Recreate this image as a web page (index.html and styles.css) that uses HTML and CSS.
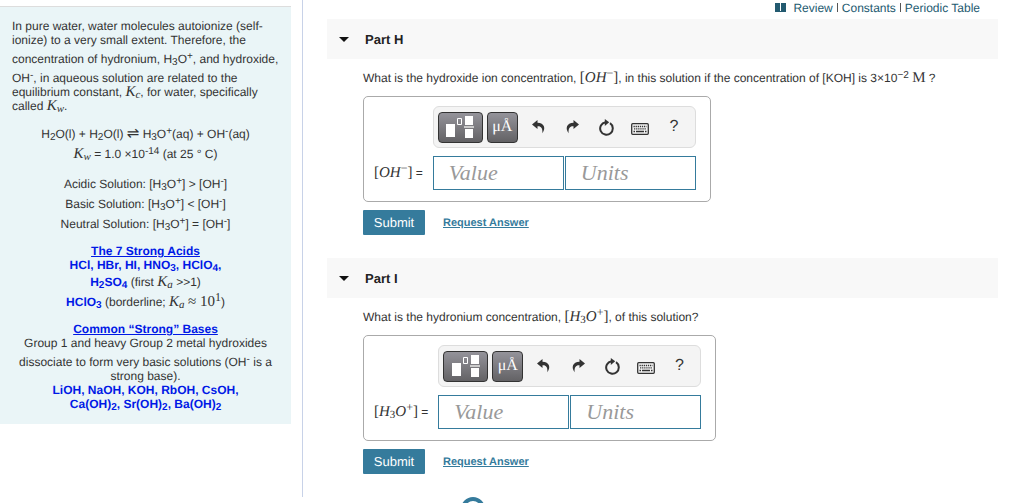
FILE: index.html
```html
<!DOCTYPE html>
<html lang="en">

<head>
    <meta charset="UTF-8">
    <meta name="viewport" content="width=device-width, initial-scale=1.0">
    <title>Hydroxide and Hydronium Concentration</title>
    <link rel="stylesheet" href="styles.css">
</head>

<body>
    <!-- shared toolbar icons -->
    <svg class="icon-defs" width="0" height="0">
        <symbol id="icon-template" viewBox="0 0 28 22">
            <path fill="#fff" d="M0 8h9v13H0zM19 0h8v9h-8zM19 13h8v9h-8z" />
            <path fill="none" stroke="#fff" d="M11.500 2.500h4v6h-4z" />
            <path fill="#ccc" d="M18 10h10v2H18z" />
        </symbol>
        <symbol id="icon-undo" viewBox="0 0 14 14">
            <path d="M5.500 0L0 4.500 5.500 9V6.300c3.500-.3 5.200 1.700 4.900 6.900C14 8.500 12.500 3.100 5.500 2.800z" />
        </symbol>
        <symbol id="icon-redo" viewBox="0 0 14 14">
            <path d="M8.500 0L14 4.500 8.500 9V6.300c-3.500-.3-5.200 1.700-4.900 6.900C0 8.500 1.500 3.100 8.500 2.800z" />
        </symbol>
        <symbol id="icon-reset" viewBox="0 0 16 17">
            <path fill="none" stroke="currentColor" stroke-width="2" d="M12 4.200A6.300 6.300 0 1 1 7.500 3.200" />
            <path d="M6.800 0l4.400 3.300-4.400 3.600z" />
        </symbol>
        <symbol id="icon-keyboard" viewBox="0 0 18 12">
            <rect x=".7" y=".7" width="16.600" height="10.600" rx="1" fill="none" stroke="currentColor" stroke-width="1.300" />
            <path fill="none" stroke="currentColor" stroke-width="1.300" stroke-dasharray="1.300 .8" d="M2.500 3.500h13M3 5.800h12.500" />
            <path fill="none" stroke="currentColor" stroke-width="1.300" d="M2.500 8.500h1.500M5 8.500h8M14 8.500h1.500" />
        </symbol>
    </svg>

    <div class="page">
        <aside class="sidebar">
            <div class="intro">
                <p class="intro-text">In pure water, water molecules autoionize (self-ionize) to a very small extent. Therefore, the concentration of hydronium, H<sub>3</sub>O<sup>+</sup>, and hydroxide, OH<sup>-</sup>, in aqueous solution are related to the equilibrium constant, <i class="math">K<sub>c</sub></i>, for water, specifically called <i class="math">K<sub>w</sub></i>.</p>

                <div class="group rows">
                    <p>H<sub>2</sub>O(l) + H<sub>2</sub>O(l) <span class="math">⇌</span> H<sub>3</sub>O<sup>+</sup>(aq) + OH<sup>-</sup>(aq)</p>
                    <p><i class="math">K<sub>w</sub></i> = 1.0 ×10<sup>-14</sup> (at 25 °&nbsp;C)</p>
                </div>

                <div class="group rows">
                    <p>Acidic Solution: [H<sub>3</sub>O<sup>+</sup>] &gt; [OH<sup>-</sup>]</p>
                    <p>Basic Solution: [H<sub>3</sub>O<sup>+</sup>] &lt; [OH<sup>-</sup>]</p>
                    <p>Neutral Solution: [H<sub>3</sub>O<sup>+</sup>] = [OH<sup>-</sup>]</p>
                </div>

                <div class="group">
                    <h3>The 7 Strong Acids</h3>
                    <p><b>HCl, HBr, HI, HNO<sub>3</sub>, HClO<sub>4</sub>,</b></p>
                    <p class="tall"><b>H<sub>2</sub>SO<sub>4</sub></b> (first <i class="math">K<sub>a</sub></i> &gt;&gt;1)</p>
                    <p class="tall"><b>HClO<sub>3</sub></b> (borderline; <i class="math">K<sub>a</sub></i> <span class="math">≈ 10<sup>1</sup></span>)</p>
                </div>

                <div class="group">
                    <h3>Common “Strong” Bases</h3>
                    <p>Group 1 and heavy Group 2 metal hydroxides dissociate to form very basic solutions (OH<sup class="raised">-</sup> is a strong base).</p>
                    <p><b>LiOH, NaOH, KOH, RbOH, CsOH,<br>Ca(OH)<sub>2</sub>, Sr(OH)<sub>2</sub>, Ba(OH)<sub>2</sub></b></p>
                </div>
            </div>
        </aside>

        <main class="content">
            <nav class="top-links">
                <svg class="book" width="11" height="9" viewBox="0 0 11 9">
                    <path fill="#235a70" d="M0 0h5v8H0zM6 0h5v8H6zM0 8h11v1H0z" />
                </svg>
                <a href="#">Review</a><span class="bar"></span><a href="#">Constants</a><span class="bar"></span><a href="#">Periodic Table</a>
            </nav>

            <section class="part">
                <button class="part-header" type="button"><span class="caret"></span>Part H</button>
                <div class="part-body">
                    <p class="question">What is the hydroxide ion concentration, <span class="math">[<i>OH</i><sup>−</sup>]</span>, in this solution if the concentration of [KOH] is 3×10<sup>−2</sup> <span class="math">M</span> ?</p>
                    <form class="answer">
                        <div class="toolbar">
                            <button class="tool template" type="button" aria-label="Templates"><svg width="28" height="22"><use href="#icon-template" /></svg></button>
                            <button class="tool symbols" type="button">μÅ</button>
                            <div class="icons">
                                <button type="button" aria-label="Undo"><svg width="14" height="14"><use href="#icon-undo" /></svg></button>
                                <button type="button" aria-label="Redo"><svg width="14" height="14"><use href="#icon-redo" /></svg></button>
                                <button type="button" aria-label="Reset"><svg width="16" height="17"><use href="#icon-reset" /></svg></button>
                                <button type="button" aria-label="Keyboard"><svg class="keyboard" width="18" height="12"><use href="#icon-keyboard" /></svg></button>
                                <button class="help" type="button">?</button>
                            </div>
                        </div>
                        <label for="value-h"><span class="math">[<i>OH</i><sup>−</sup>]</span> =</label>
                        <div class="fields">
                            <input id="value-h" type="text" placeholder="Value">
                            <input type="text" placeholder="Units" aria-label="Units">
                        </div>
                    </form>
                    <div class="actions">
                        <button class="submit" type="button">Submit</button>
                        <a href="#">Request Answer</a>
                    </div>
                </div>
            </section>

            <section class="part">
                <button class="part-header" type="button"><span class="caret"></span>Part I</button>
                <div class="part-body">
                    <p class="question">What is the hydronium concentration, <span class="math">[<i>H</i><sub>3</sub><i>O</i><sup>+</sup>]</span>, of this solution?</p>
                    <form class="answer">
                        <div class="toolbar">
                            <button class="tool template" type="button" aria-label="Templates"><svg width="28" height="22"><use href="#icon-template" /></svg></button>
                            <button class="tool symbols" type="button">μÅ</button>
                            <div class="icons">
                                <button type="button" aria-label="Undo"><svg width="14" height="14"><use href="#icon-undo" /></svg></button>
                                <button type="button" aria-label="Redo"><svg width="14" height="14"><use href="#icon-redo" /></svg></button>
                                <button type="button" aria-label="Reset"><svg width="16" height="17"><use href="#icon-reset" /></svg></button>
                                <button type="button" aria-label="Keyboard"><svg class="keyboard" width="18" height="12"><use href="#icon-keyboard" /></svg></button>
                                <button class="help" type="button">?</button>
                            </div>
                        </div>
                        <label for="value-i"><span class="math">[<i>H</i><sub>3</sub><i>O</i><sup>+</sup>]</span> =</label>
                        <div class="fields">
                            <input id="value-i" type="text" placeholder="Value">
                            <input type="text" placeholder="Units" aria-label="Units">
                        </div>
                    </form>
                    <div class="actions">
                        <button class="submit" type="button">Submit</button>
                        <a href="#">Request Answer</a>
                    </div>
                </div>
            </section>

            <footer class="brand">
                <svg width="24" height="24" viewBox="0 0 24 24">
                    <circle cx="12" cy="12" r="10" fill="#fff" stroke="#357b9c" stroke-width="4" />
                </svg>
            </footer>
        </main>
    </div>
</body>

</html>
```
FILE: styles.css
```css
* {
    box-sizing: border-box;
}

body {
    margin: 0;
    font-family: "Liberation Sans", Arial, sans-serif;
    font-size: 12px;
    line-height: 14px;
    color: #333;
    background-color: #fff;
    text-rendering: geometricPrecision;
}

p,
h3 {
    margin: 0;
}

button {
    font-family: inherit;
    border: none;
    padding: 0;
    cursor: pointer;
    text-rendering: inherit;
}

sub,
sup {
    font-size: 10px;
    line-height: 0;
}

sub {
    vertical-align: -2px;
}

sup {
    vertical-align: 4px;
}

.icon-defs {
    position: absolute;
}

.math {
    font-family: "Liberation Serif", "Times New Roman", serif;
    font-size: 15px;
    line-height: 0;
}

.math sub {
    font-size: 11px;
}

.math sup {
    font-size: 12px;
    vertical-align: 5px;
}

.page {
    display: grid;
    grid-template-columns: 303px 1fr;
    height: 100vh;
    overflow: hidden;
}

/* left column */
.sidebar {
    border-right: 1px solid #c8d2e8;
    padding: 6px 11px 0 0;
    margin-bottom: 6px;
}

.intro {
    background-color: #eaf5f7;
    border-top: 1px solid #ddd;
    padding: 12px 12px 13px;
}

.intro-text {
    padding-bottom: 1px;
}

.intro-text sup,
.raised {
    line-height: 19px;
}

.group {
    text-align: center;
    margin-top: 10px;
}

.rows p,
.tall {
    line-height: 20px;
}

.group h3,
.group b {
    color: #0019e6;
}

.group h3 {
    font-size: 12px;
    text-decoration: underline;
}

/* right column */
.content {
    padding: 0 26px 0 24px;
    overflow: hidden;
}

.top-links {
    display: flex;
    align-items: center;
    justify-content: flex-end;
    height: 15px;
    margin-bottom: 4px;
    padding-right: 18px;
}

.top-links a {
    color: #235a70;
    text-decoration: none;
}

.book {
    margin-right: 7px;
}

.bar {
    width: 1px;
    height: 9px;
    margin: 0 4px;
    background-color: #555;
}

.part {
    margin-bottom: 23px;
}

.part-header {
    display: flex;
    align-items: center;
    width: 100%;
    height: 40px;
    padding-left: 12px;
    background-color: #f8f8f8;
    color: #222;
    font-size: 13px;
    font-weight: bold;
}

.caret {
    border: 5px solid transparent;
    border-top-color: #111;
    border-bottom-width: 0;
    margin-right: 16px;
}

.part-body {
    padding-left: 36px;
}

.question {
    padding-top: 2px;
    line-height: 35px;
}

.answer {
    display: inline-grid;
    grid-template-columns: auto 263px;
    gap: 8px 10px;
    align-items: center;
    padding: 9px 14px 11px 10px;
    border: 1px solid #aaa;
    border-radius: 5px;
    vertical-align: top;
}

.toolbar {
    grid-column: 2;
    display: flex;
    align-items: center;
    gap: 4px;
    height: 42px;
    padding: 0 4px;
    background-color: #f4f4f4;
    border: 1px solid #ddd;
    border-radius: 6px;
}

.tool {
    display: flex;
    align-items: center;
    justify-content: center;
    height: 31px;
    color: #fff;
    background: linear-gradient(#94939a, #636265);
    border: 1px solid #333;
    border-radius: 4px;
}

.template {
    width: 45px;
}

.symbols {
    width: 31px;
    font-family: "Liberation Serif", serif;
    font-size: 16px;
}

.icons {
    flex: 1;
    display: flex;
}

.icons button {
    flex: 1;
    display: flex;
    align-items: center;
    justify-content: center;
    background: none;
    color: #333;
}

.icons svg {
    fill: currentColor;
}

.keyboard {
    margin-top: 4px;
}

.icons .help {
    font-size: 16px;
}

.fields {
    display: grid;
    grid-template-columns: 1fr 1fr;
    gap: 1px;
}

.fields input {
    width: 100%;
    height: 34px;
    padding: 0 15px;
    border: 1px solid #357b9c;
    font-family: "Liberation Serif", "Times New Roman", serif;
    font-size: 22px;
    font-style: italic;
}

.fields input::placeholder {
    color: #999;
}

.actions {
    display: flex;
    align-items: center;
    gap: 18px;
    margin-top: 8px;
}

.submit {
    width: 62px;
    height: 25px;
    background-color: #357b9c;
    color: #fff;
    font-size: 13px;
    border-radius: 1px;
}

.actions a {
    color: #357b9c;
    font-size: 11px;
    font-weight: bold;
}

.brand {
    padding-left: 134px;
}
```
